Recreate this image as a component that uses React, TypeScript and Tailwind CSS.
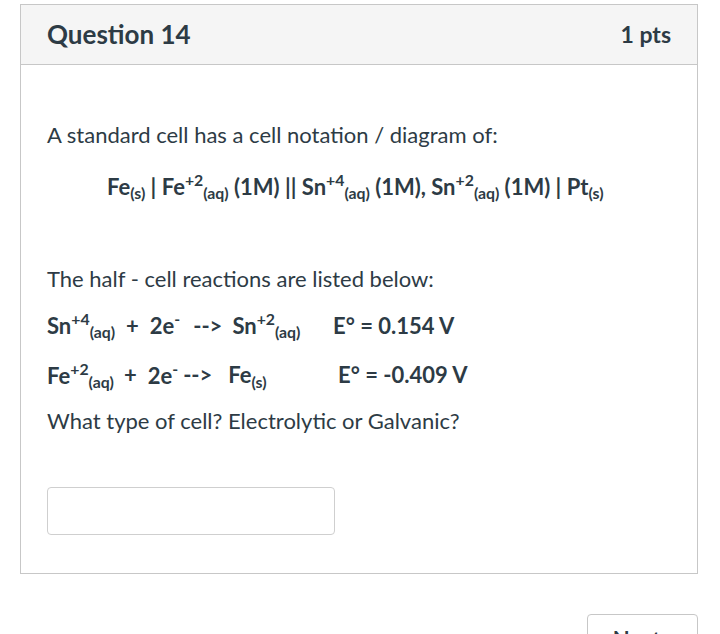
import React from "react";

const Sub = ({ children }: { children: React.ReactNode }) => (
  <span className="text-[0.72em] leading-none align-[-0.3em]">{children}</span>
);
const Sup = ({ children }: { children: React.ReactNode }) => (
  <span className="text-[0.72em] leading-none align-[0.55em]">{children}</span>
);

export default function App() {
  return (
    <div className="w-[720px] h-[634px] bg-white overflow-hidden text-[#2d3b45]" style={{ fontFamily: "Lato, 'Open Sans', sans-serif" }}>
      <div className="pt-[4px] pl-[20px] pr-[22px]">
        <div className="border border-[#c7c7c7]">
          <div className="h-[60px] bg-[#f5f5f5] border-b border-[#c7c7c7] flex items-center justify-between px-[26px]">
            <div className="text-[26px] font-bold">Question 14</div>
            <div className="text-[23px] font-bold">1 pts</div>
          </div>
          <div className="px-[26px] pt-[56px] pb-[38px]">
            <p className="text-[22px] leading-[28px]">A standard cell has a cell notation / diagram of:</p>
            <p className="text-[22px] font-bold leading-[28px] mt-[23px] pl-[60px] whitespace-nowrap">
              Fe<Sub>(s)</Sub> | Fe<Sup>+2</Sup><Sub>(aq)</Sub> (1M) || Sn<Sup>+4</Sup><Sub>(aq)</Sub> (1M), Sn<Sup>+2</Sup><Sub>(aq)</Sub> (1M) | Pt<Sub>(s)</Sub>
            </p>
            <p className="text-[22px] leading-[28px] mt-[64px]">The half - cell reactions are listed below:</p>
            <div className="text-[22px] font-bold leading-[28px] mt-[18px] flex items-baseline whitespace-nowrap">
              <span className="w-[286px] flex items-baseline">
                <span>Sn<Sup>+4</Sup><Sub>(aq)</Sub></span>
                <span className="ml-[11px]">+</span>
                <span className="ml-[11px]">2e<Sup>-</Sup></span>
                <span className="ml-[13px]">--&gt;</span>
                <span className="ml-[10px]">Sn<Sup>+2</Sup><Sub>(aq)</Sub></span>
              </span>
              <span>E° = 0.154 V</span>
            </div>
            <div className="text-[22px] font-bold leading-[28px] mt-[20px] flex items-baseline whitespace-nowrap">
              <span className="w-[291px] flex items-baseline">
                <span>Fe<Sup>+2</Sup><Sub>(aq)</Sub></span>
                <span className="ml-[10px]">+</span>
                <span className="ml-[11px]">2e<Sup>-</Sup></span>
                <span className="ml-[5px]">--&gt;</span>
                <span className="ml-[16px]">Fe<Sub>(s)</Sub></span>
              </span>
              <span>E° = -0.409 V</span>
            </div>
            <p className="text-[22px] leading-[28px] mt-[17px]">What type of cell? Electrolytic or Galvanic?</p>
            <input type="text" className="mt-[52px] block w-[288px] h-[48px] border border-[#cfcfcf] rounded-[4px] bg-white" />
          </div>
        </div>
        <div className="flex justify-end mt-[40px]">
          <button className="w-[111px] h-[40px] border border-[#c7c7c7] rounded-[4px] bg-white text-[22px] font-bold pt-[12px] leading-none text-[#2d3b45]">Next ›</button>
        </div>
      </div>
    </div>
  );
}
